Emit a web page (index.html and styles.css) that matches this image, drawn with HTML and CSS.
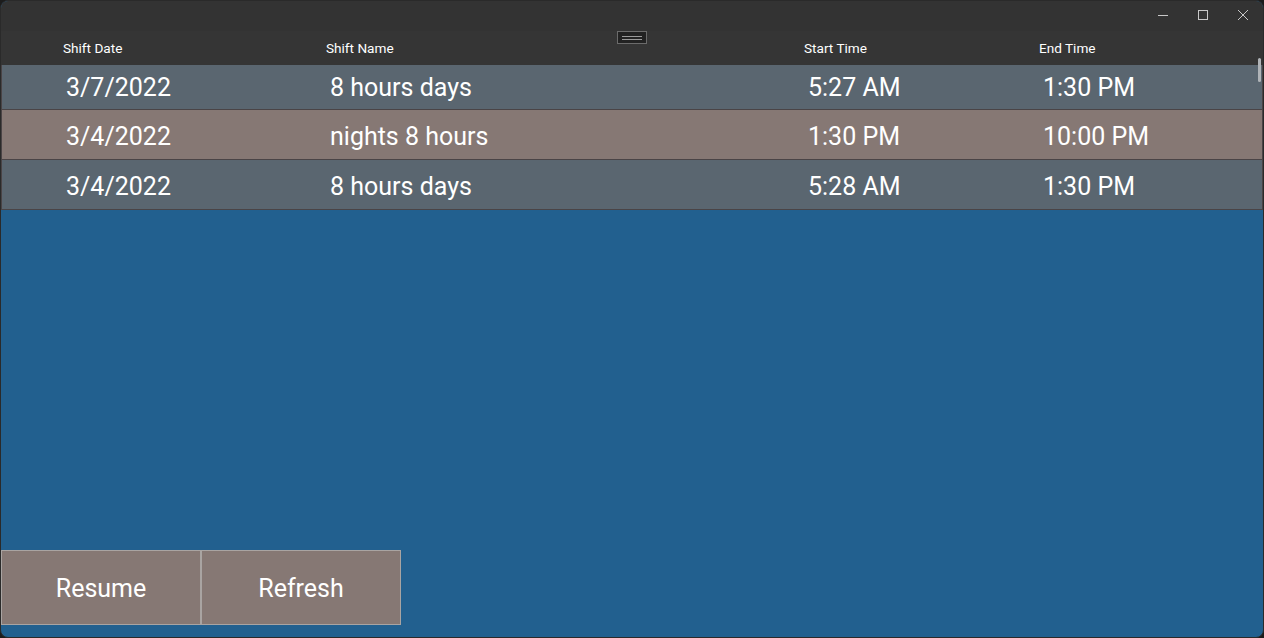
FILE: index.html
```html
<!DOCTYPE html>
<html>
<head>
<meta charset="utf-8">
<link rel="stylesheet" href="styles.css">
</head>
<body>
<div class="window">
  <div class="titlebar">
    <div class="cap"><svg width="12" height="12" viewBox="0 0 12 12"><path d="M1 6.5H11" stroke="#c8c8c8" stroke-width="1"/></svg></div>
    <div class="cap"><svg width="12" height="12" viewBox="0 0 12 12"><rect x="1.5" y="1.5" width="9" height="9" fill="none" stroke="#c8c8c8" stroke-width="1"/></svg></div>
    <div class="cap"><svg width="12" height="12" viewBox="0 0 12 12"><path d="M1 1L11 11M11 1L1 11" stroke="#c8c8c8" stroke-width="1"/></svg></div>
  </div>
  <div class="header">
    <div>Shift Date</div>
    <div>Shift Name</div>
    <div>Start Time</div>
    <div>End Time</div>
    <div class="grip"><span></span><span></span></div>
  </div>
  <div class="rows">
    <div class="row first gray"><div>3/7/2022</div><div>8 hours days</div><div>5:27 AM</div><div>1:30 PM</div></div>
    <div class="row brown"><div>3/4/2022</div><div>nights 8 hours</div><div>1:30 PM</div><div>10:00 PM</div></div>
    <div class="row gray"><div>3/4/2022</div><div>8 hours days</div><div>5:28 AM</div><div>1:30 PM</div></div>
    <div class="thumb"></div>
  </div>
  <div class="spacer"></div>
  <div class="buttons">
    <button class="btn">Resume</button>
    <button class="btn">Refresh</button>
  </div>
</div>
</body>
</html>
```
FILE: styles.css
```css
html, body {
  margin: 0;
  padding: 0;
  background: #1c1c1c;
}
body {
  width: 1264px;
  height: 638px;
  overflow: hidden;
  font-family: Roboto, "Liberation Sans", sans-serif;
}
.window {
  width: 1264px;
  height: 638px;
  box-sizing: border-box;
  border: 1px solid #2a2a2a;
  border-radius: 8px;
  overflow: hidden;
  background: #22608f;
  display: flex;
  flex-direction: column;
}
.titlebar {
  height: 30px;
  background: #333333;
  display: flex;
  justify-content: flex-end;
  padding-right: 0;
}
.cap {
  width: 40px;
  height: 30px;
  display: flex;
  align-items: center;
  justify-content: center;
}
.cap svg {
  margin-top: -2px;
}
.header {
  position: relative;
  height: 34px;
  background: #353535;
  display: grid;
  grid-template-columns: 263px 478px 235px 1fr;
  padding-left: 62px;
  align-items: center;
  color: #ffffff;
  font-size: 13.6px;
}
.grip {
  position: absolute;
  left: 616px;
  top: 0;
  width: 28px;
  height: 11px;
  border: 1px solid #6b6b6b;
  background: #222222;
  display: flex;
  flex-direction: column;
  justify-content: center;
  align-items: center;
  gap: 2px;
}
.grip span {
  display: block;
  width: 20px;
  height: 1px;
  background: #9a9a9a;
}
.rows {
  position: relative;
}
.row {
  display: grid;
  grid-template-columns: 264px 478px 235px 1fr;
  padding-left: 64px;
  padding-top: 3px;
  box-sizing: border-box;
  align-items: center;
  height: 50px;
  border-bottom: 1px solid #4a4446;
  border-left: 1px solid #4a4446;
  border-right: 1px solid #4a4446;
  color: #ffffff;
  font-size: 25px;
}
.row.first {
  height: 45px;
  padding-top: 0;
}
.gray {
  background: #5a6670;
}
.brown {
  background: #867874;
}
.thumb {
  position: absolute;
  right: 2px;
  top: -7px;
  width: 3px;
  height: 24px;
  border-radius: 2px;
  background: #b0b4b8;
}
.spacer {
  flex: 1;
}
.buttons {
  display: flex;
  margin-bottom: 12px;
}
.btn {
  width: 200px;
  height: 75px;
  box-sizing: border-box;
  background: #867874;
  border: 1px solid #a9a4a2;
  color: #ffffff;
  font-family: Roboto, "Liberation Sans", sans-serif;
  font-size: 25px;
  padding: 2px 0 0 0;
  margin: 0;
}
```
